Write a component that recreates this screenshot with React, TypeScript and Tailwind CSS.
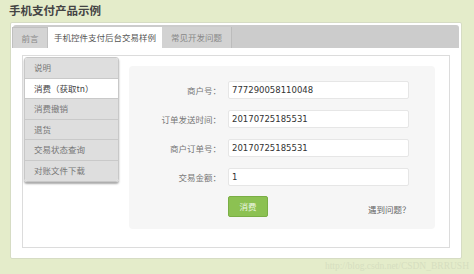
const menu = ["说明", "消费（获取tn）", "消费撤销", "退货", "交易状态查询", "对账文件下载"];

const fields = [
  { label: "商户号：", value: "777290058110048" },
  { label: "订单发送时间：", value: "20170725185531" },
  { label: "商户订单号：", value: "20170725185531" },
  { label: "交易金额：", value: "1" },
];

export default function App() {
  return (
    <div
      className="h-[274px] w-[474px] bg-[#e4ecca] overflow-hidden flex flex-col relative"
      style={{ fontFamily: '"Noto Sans CJK SC", sans-serif' }}
    >
      <div className="pl-[9px] pt-[2px] h-[22px] text-[11.5px] leading-[16px] font-bold text-[#444]">
        手机支付产品示例
      </div>
      <div className="ml-[10px] w-[452px] h-[237px] bg-white border border-[#d6dcc4] rounded-[2px] p-[2px] flex flex-col">
        <div className="h-[23px] bg-[#cccccc] rounded-t-[3px] flex items-end text-[8.5px] text-[#888]">
          <div className="h-[21px] w-[36px] ml-[-1px] border border-b-0 border-[#c0c0c0] bg-[#d4d4d4] flex items-center justify-center">
            前言
          </div>
          <div className="h-[21px] w-[114px] bg-white text-[#555] flex items-center justify-center">
            手机控件支付后台交易样例
          </div>
          <div className="h-[21px] w-[70px] border-r border-[#bcbcbc] bg-[#d2d2d2] flex items-center justify-center">
            常见开发问题
          </div>
        </div>
        <div className="flex-1 px-[9px] pt-[7px] pb-[8px] flex">
          <div className="flex-1 border border-[#dcdcdc] p-[1px] flex">
            <div className="w-[95px] self-start rounded-[3px] border border-[#c8c8c8] shadow-[0_2px_2px_#aaa] overflow-hidden text-[8.5px] text-[#777]">
              {menu.map((m, i) => (
                <div
                  key={m}
                  className={`h-[20.5px] flex items-center pl-[9px] border-b border-[#c9c9c9] last:border-b-0 ${
                    i === 1 ? "bg-white text-[#444]" : "bg-[#dedede]"
                  }`}
                >
                  {m}
                </div>
              ))}
            </div>
            <div className="ml-[10px] mt-[9px] w-[306px] h-[163px] bg-[#f6f6f6] rounded-[4px] pt-[15px] flex flex-col gap-[11px]">
              {fields.map((f) => (
                <div key={f.label} className="flex items-center h-[18px]">
                  <div className="w-[93px] text-right text-[8.5px] text-[#777] pr-[1px]">{f.label}</div>
                  <div
                    className="ml-[6px] w-[181px] h-[18px] bg-white border border-[#e6e6e6] rounded-[2px] flex items-center pl-[3px] text-[8.5px] text-[#333]"
                    style={{ fontFamily: '"DejaVu Sans", sans-serif' }}
                  >
                    {f.value}
                  </div>
                </div>
              ))}
              <div className="flex items-center mt-[-1px]">
                <div className="ml-[99px] w-[40px] h-[21px] bg-[#8cc152] border border-[#7aae45] rounded-[2px] flex items-center justify-center text-[8.5px] text-[#eef7e4]">
                  消费
                </div>
                <div className="ml-[100px] text-[8.5px] text-[#666] mt-[6px]">遇到问题？</div>
              </div>
            </div>
          </div>
        </div>
      </div>
      <div
        className="absolute right-[5px] bottom-[3px] text-[9.5px] leading-[10px] text-[#d6dec0]"
        style={{ fontFamily: '"Liberation Serif", serif' }}
      >
        http://blog.csdn.net/CSDN_BRRUSH
      </div>
    </div>
  );
}
